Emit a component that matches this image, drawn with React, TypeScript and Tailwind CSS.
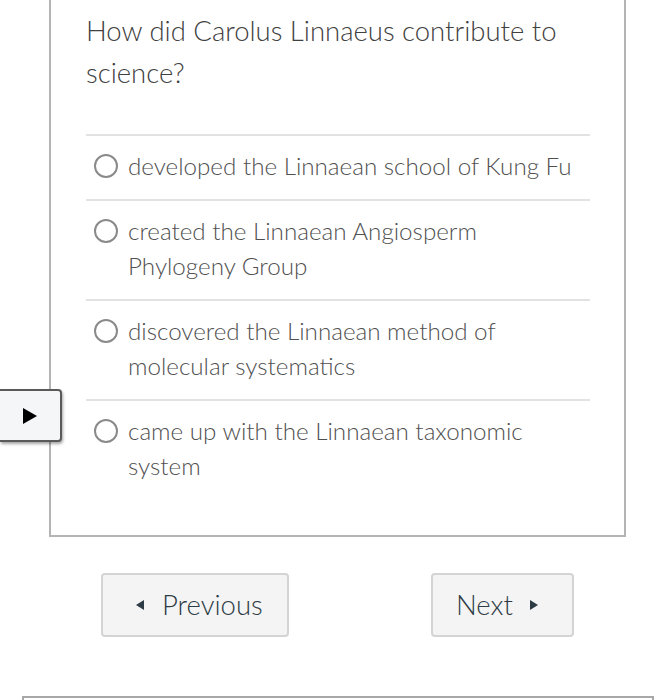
import React from "react";

const options = [
  "developed the Linnaean school of Kung Fu",
  "created the Linnaean Angiosperm Phylogeny Group",
  "discovered the Linnaean method of molecular systematics",
  "came up with the Linnaean taxonomic system",
];

export default function App() {
  return (
    <div
      className="relative min-h-[700px] bg-white overflow-hidden text-[#3d3d3d]"
      style={{ fontFamily: "Lato, 'Noto Sans', sans-serif" }}
    >
      <div className="ml-[49px] w-[577px] -mt-[10px] border-2 border-[#b4b4b4] border-t-0 pl-[35px] pr-[34px] pt-[20px] pb-[36px]">
        <h2 className="text-[27.5px] leading-[42px] font-light text-[#404040] pb-[40px] border-b-2 border-[#e2e2e2]">
          How did Carolus Linnaeus contribute to science?
        </h2>

        <ul>
          {options.map((opt, i) => (
            <li
              key={i}
              className={`flex items-start gap-[10px] pt-[12px] pb-[16px] pl-[8px] ${
                i < options.length - 1 ? "border-b-2 border-[#e2e2e2]" : ""
              }`}
            >
              <span className="mt-[6px] shrink-0 w-[24px] h-[24px] rounded-full border-[2.5px] border-[#8a8a8a] bg-white" />
              <span className="text-[24.2px] leading-[35px] font-light text-[#505050] pr-[10px]">{opt}</span>
            </li>
          ))}
        </ul>
      </div>

      <div className="ml-[49px] w-[577px] flex justify-between px-[52px] mt-[36px]">
        <button className="h-[64px] w-[188px] flex items-center gap-[18px] pl-[33px] rounded-[4px] border-2 border-[#d4d4d4] bg-[#f4f4f4] text-[27.5px] font-light text-[#2d3b45]">
          <svg width="8" height="10" viewBox="0 0 8 10">
            <path d="M8 0 L0 5 L8 10 Z" fill="#2d3b45" />
          </svg>
          <span>Previous</span>
        </button>
        <button className="h-[64px] w-[143px] flex items-center gap-[17px] pl-[23px] rounded-[4px] border-2 border-[#d4d4d4] bg-[#f4f4f4] text-[27.5px] font-light text-[#2d3b45]">
          <span>Next</span>
          <svg width="8" height="10" viewBox="0 0 8 10">
            <path d="M0 0 L8 5 L0 10 Z" fill="#2d3b45" />
          </svg>
        </button>
      </div>

      <div className="absolute left-0 top-[389px] w-[62px] h-[53px] rounded-r-[4px] border-2 border-l-0 border-[#5a5a5a] bg-[#f5f6f8] shadow-[1px_2px_3px_rgba(0,0,0,0.35)] flex items-center justify-center">
        <svg width="16" height="18" viewBox="0 0 16 18">
          <path d="M1 1 L15 9 L1 17 Z" fill="#000" />
        </svg>
      </div>

      <div className="mt-[59px] ml-[22px] w-[632px] h-[20px] border-2 border-b-0 border-[#a8a8a8]" />
    </div>
  );
}
